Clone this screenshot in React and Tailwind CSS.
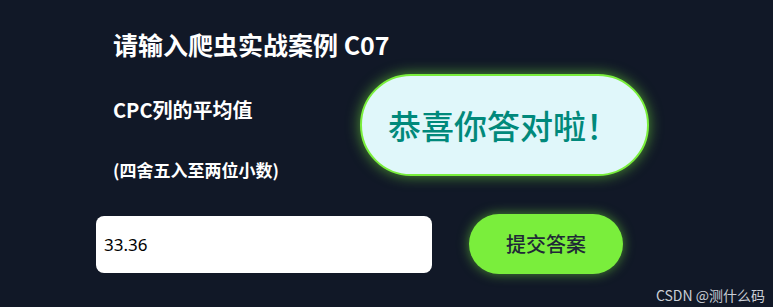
import React from "react";

const cjk = "font-['Noto_Sans_CJK_SC','Noto_Sans',sans-serif]";

export default function App() {
  const [answer, setAnswer] = React.useState("33.36");

  return (
    <div className={`relative min-h-[307px] w-full overflow-hidden bg-[#111827] ${cjk}`}>
      {/* Question */}
      <div className="pl-[113px] pt-[28px] text-white">
        <h1 className="text-[25px] font-bold leading-[32px]">请输入爬虫实战案例 C07</h1>
        <p className="mt-[36px] text-[20px] font-bold leading-[28px]">CPC列的平均值</p>
        <p className="mt-[34px] text-[17px] font-bold leading-[24px]">(四舍五入至两位小数)</p>
      </div>

      {/* Answer row */}
      <div className="mt-[32px] flex items-center gap-[37px] pl-[96px]">
        <input
          value={answer}
          onChange={(e) => setAnswer(e.target.value)}
          className="h-[57px] w-[336px] rounded-[8px] bg-white pl-[8px] font-['Noto_Sans',sans-serif] text-[17px] text-black outline-none"
        />
        <button
          type="button"
          className="h-[60px] w-[154px] rounded-full bg-[#7aee3c] text-[20px] font-medium text-[#1f2937] shadow-[0_0_12px_rgba(122,238,60,0.55)]"
        >
          提交答案
        </button>
      </div>

      {/* Result toast */}
      <div className="absolute left-[360px] top-[74px] flex h-[102px] w-[289px] items-center rounded-full border-2 border-[#7aee3c] bg-[#e0f7fa] pl-[26px] shadow-[0_0_14px_rgba(122,238,60,0.6)]">
        <span className="text-[33px] font-medium leading-none text-[#00897b]">恭喜你答对啦！</span>
      </div>

      {/* Watermark */}
      <div className="absolute bottom-[5px] right-[8px] text-[14px] leading-none text-[#c9ced6]">
        CSDN @测什么码
      </div>
    </div>
  );
}
